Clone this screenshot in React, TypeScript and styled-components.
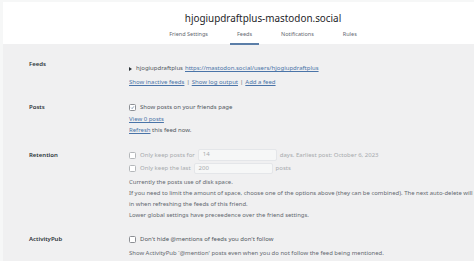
import React from "react";
import styled, { createGlobalStyle } from "styled-components";

const GlobalStyle = createGlobalStyle`
  html, body {
    margin: 0;
    padding: 0;
    background: #f6f7f7;
    overflow: hidden;
  }
  body {
    font-family: "Noto Sans", "Open Sans", sans-serif;
    color: #50575e;
  }
`;

const tabs = ["Friend Settings", "Feeds", "Notifications", "Rules"];

const Checkbox = ({ checked, disabled }: { checked?: boolean; disabled?: boolean }) => (
  <Box disabled={disabled}>
    {checked ? (
      <svg width="7" height="7" viewBox="0 0 20 20">
        <path d="M4.5 10.5 L8.5 14.5 L15.5 5.5" fill="none" stroke="#46648c" strokeWidth="2.4" />
      </svg>
    ) : null}
  </Box>
);

const App = () => {
  return (
    <>
      <GlobalStyle />
      <Frame>
        <Header>
          <Title>hjogiupdraftplus-mastodon.social</Title>
          <TabBar>
            {tabs.map((t) => (
              <Tab key={t} active={t === "Feeds"}>
                {t}
              </Tab>
            ))}
          </TabBar>
        </Header>
        <Main>
          <Section>
            <Label top={16}>Feeds</Label>
            <Cell top={20} bottom={8}>
              <Line>
                <Arrow />
                <span>hjogiupdraftplus</span>
                <Link>https://mastodon.social/users/hjogiupdraftplus</Link>
              </Line>
              <Line mt={5}>
                <Link>Show inactive feeds</Link>
                <Pipe>|</Pipe>
                <Link>Show log output</Link>
                <Pipe>|</Pipe>
                <Link>Add a feed</Link>
              </Line>
            </Cell>
          </Section>

          <Section>
            <Label top={8}>Posts</Label>
            <Cell top={8} bottom={9}>
              <Line gap={4}>
                <Checkbox checked />
                <span>Show posts on your friends page</span>
              </Line>
              <Line mt={3}>
                <Link>View 0 posts</Link>
              </Line>
              <Line mt={2}>
                <span>
                  <Link>Refresh</Link> this feed now.
                </span>
              </Line>
            </Cell>
          </Section>

          <Section>
            <Label top={6} lh={10}>
              Retention
            </Label>
            <Cell top={5} bottom={10}>
              <FieldRow>
                <Checkbox disabled />
                <Muted>Only keep posts for</Muted>
                <Field width={79}>14</Field>
                <Muted>days. Earliest post: October 6, 2023</Muted>
              </FieldRow>
              <FieldRow mt={1.5}>
                <Checkbox disabled />
                <Muted>Only keep the last</Muted>
                <Field width={79}>200</Field>
                <Muted>posts</Muted>
              </FieldRow>
              <Note mt={2.5}>Currently the posts use of disk space.</Note>
              <Note>
                If you need to limit the amount of space, choose one of the options above (they can be
                combined). The next auto-delete will kick
                <br />
                in when refreshing the feeds of this friend.
              </Note>
              <Note>Lower global settings have preceedence over the friend settings.</Note>
            </Cell>
          </Section>

          <Section>
            <Label top={4}>ActivityPub</Label>
            <Cell top={4} bottom={10}>
              <Line gap={4}>
                <Checkbox />
                <span>Don&apos;t hide @mentions of feeds you don&apos;t follow</span>
              </Line>
              <Note mt={4}>
                Show ActivityPub `@mention&apos; posts even when you do not follow the feed being mentioned.
              </Note>
            </Cell>
          </Section>
        </Main>
      </Frame>
    </>
  );
};

export default App;

const Frame = styled.div`
  width: 520px;
  margin-left: 3px;
  padding-top: 2px;
`;

const Header = styled.header`
  height: 42px;
  box-sizing: border-box;
  padding-top: 9px;
  background: #ffffff;
  display: flex;
  flex-direction: column;
  align-items: center;
`;

const Title = styled.h1`
  margin: 0;
  font-size: 9.9px;
  line-height: 14px;
  font-weight: 400;
  color: #1d2327;
`;

const TabBar = styled.nav`
  display: flex;
  gap: 15px;
  margin-top: 4px;
`;

const Tab = styled.div<{ active?: boolean }>`
  padding: 0 7px 4px;
  font-size: 5.5px;
  line-height: 10px;
  color: #646970;
  border-bottom: 2px solid ${(p) => (p.active ? "#5b7ea8" : "transparent")};
`;

const Main = styled.main`
  background: #f0f0f1;
  padding-left: 26px;
  min-height: 230px;
`;

const Section = styled.section`
  display: grid;
  grid-template-columns: 100px 1fr;
`;

const Label = styled.div<{ top: number; lh?: number }>`
  padding-top: ${(p) => p.top}px;
  font-size: 6px;
  line-height: ${(p) => p.lh ?? 9}px;
  font-weight: 600;
  color: #2c3338;
`;

const Cell = styled.div<{ top: number; bottom: number }>`
  padding-top: ${(p) => p.top}px;
  padding-bottom: ${(p) => p.bottom}px;
  font-size: 6px;
  line-height: 9px;
  white-space: nowrap;
`;

const Line = styled.div<{ mt?: number; gap?: number }>`
  display: flex;
  align-items: center;
  gap: ${(p) => p.gap ?? 2}px;
  margin-top: ${(p) => p.mt ?? 0}px;
  height: 9px;
`;

const FieldRow = styled.div<{ mt?: number }>`
  display: flex;
  align-items: center;
  gap: 3px;
  margin-top: ${(p) => p.mt ?? 0}px;
  height: 12px;
  & > :first-child {
    margin-right: 1px;
  }
`;

const Link = styled.a`
  color: #4a74a8;
  text-decoration: underline;
  cursor: pointer;
`;

const Pipe = styled.span`
  color: #646970;
`;

const Arrow = styled.span`
  width: 0;
  height: 0;
  margin: 0 2px 0 0;
  border-top: 2px solid transparent;
  border-bottom: 2px solid transparent;
  border-left: 3px solid #2c3338;
`;

const Box = styled.span<{ disabled?: boolean }>`
  width: 7px;
  height: 7px;
  box-sizing: border-box;
  border: 1px solid ${(p) => (p.disabled ? "#b4b7ba" : "#8c8f94")};
  border-radius: 1.5px;
  background: #ffffff;
  display: inline-flex;
  align-items: center;
  justify-content: center;
  flex-shrink: 0;
  svg {
    display: block;
  }
`;

const Muted = styled.span`
  color: #a7aaad;
`;

const Field = styled.div<{ width: number }>`
  width: ${(p) => p.width}px;
  height: 11.5px;
  box-sizing: border-box;
  padding-left: 4px;
  border: 1px solid #e4e6e9;
  border-radius: 2px;
  background: #f6f7f7;
  color: #a7aaad;
  font-size: 6px;
  line-height: 9.5px;
`;

const Note = styled.p<{ mt?: number }>`
  margin: ${(p) => p.mt ?? 0}px 0 0;
  font-size: 5.95px;
  line-height: 11px;
  color: #646970;
`;
